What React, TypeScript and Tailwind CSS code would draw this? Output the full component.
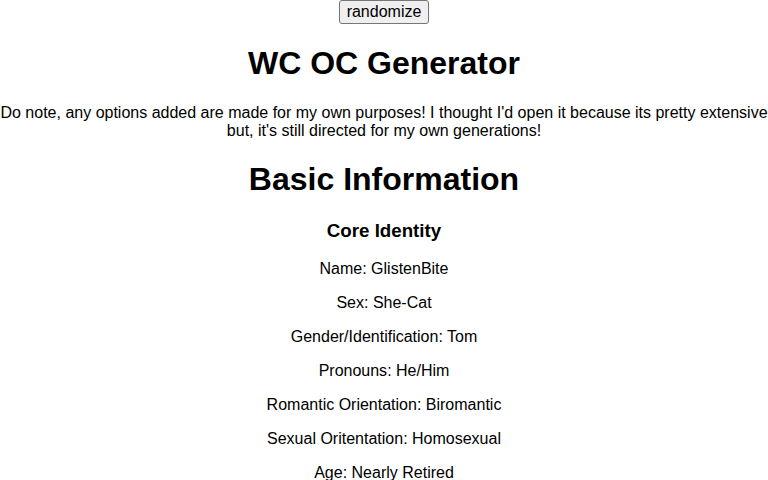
import React from 'react';

const fields: [string, string][] = [
  ['Name', 'GlistenBite'],
  ['Sex', 'She-Cat'],
  ['Gender/Identification', 'Tom'],
  ['Pronouns', 'He/Him'],
  ['Romantic Orientation', 'Biromantic'],
  ['Sexual Oritentation', 'Homosexual'],
  ['Age', 'Nearly Retired'],
];

export default function App() {
  return (
    <div className="text-center text-black bg-white min-h-screen font-['Liberation_Sans',Arial,sans-serif] text-[16px] leading-[normal]">
      {/* randomize button */}
      <button className="px-[7px] py-[2px] border border-[#767676] rounded-[3px] bg-[#efefef] hover:bg-[#e5e5e5] text-black">
        randomize
      </button>

      <h1 className="text-[32px] font-bold my-[21.44px]">WC OC Generator</h1>

      <p className="my-4">
        Do note, any options added are made for my own purposes! I thought I'd open it because its pretty extensive
        but, it's still directed for my own generations!
      </p>

      <h1 className="text-[32px] font-bold my-[21.44px]">Basic Information</h1>

      <h3 className="text-[18.72px] font-bold my-[18.72px]">Core Identity</h3>

      {fields.map(([label, value]) => (
        <p key={label} className="my-4">
          {label}: {value}
        </p>
      ))}
    </div>
  );
}
